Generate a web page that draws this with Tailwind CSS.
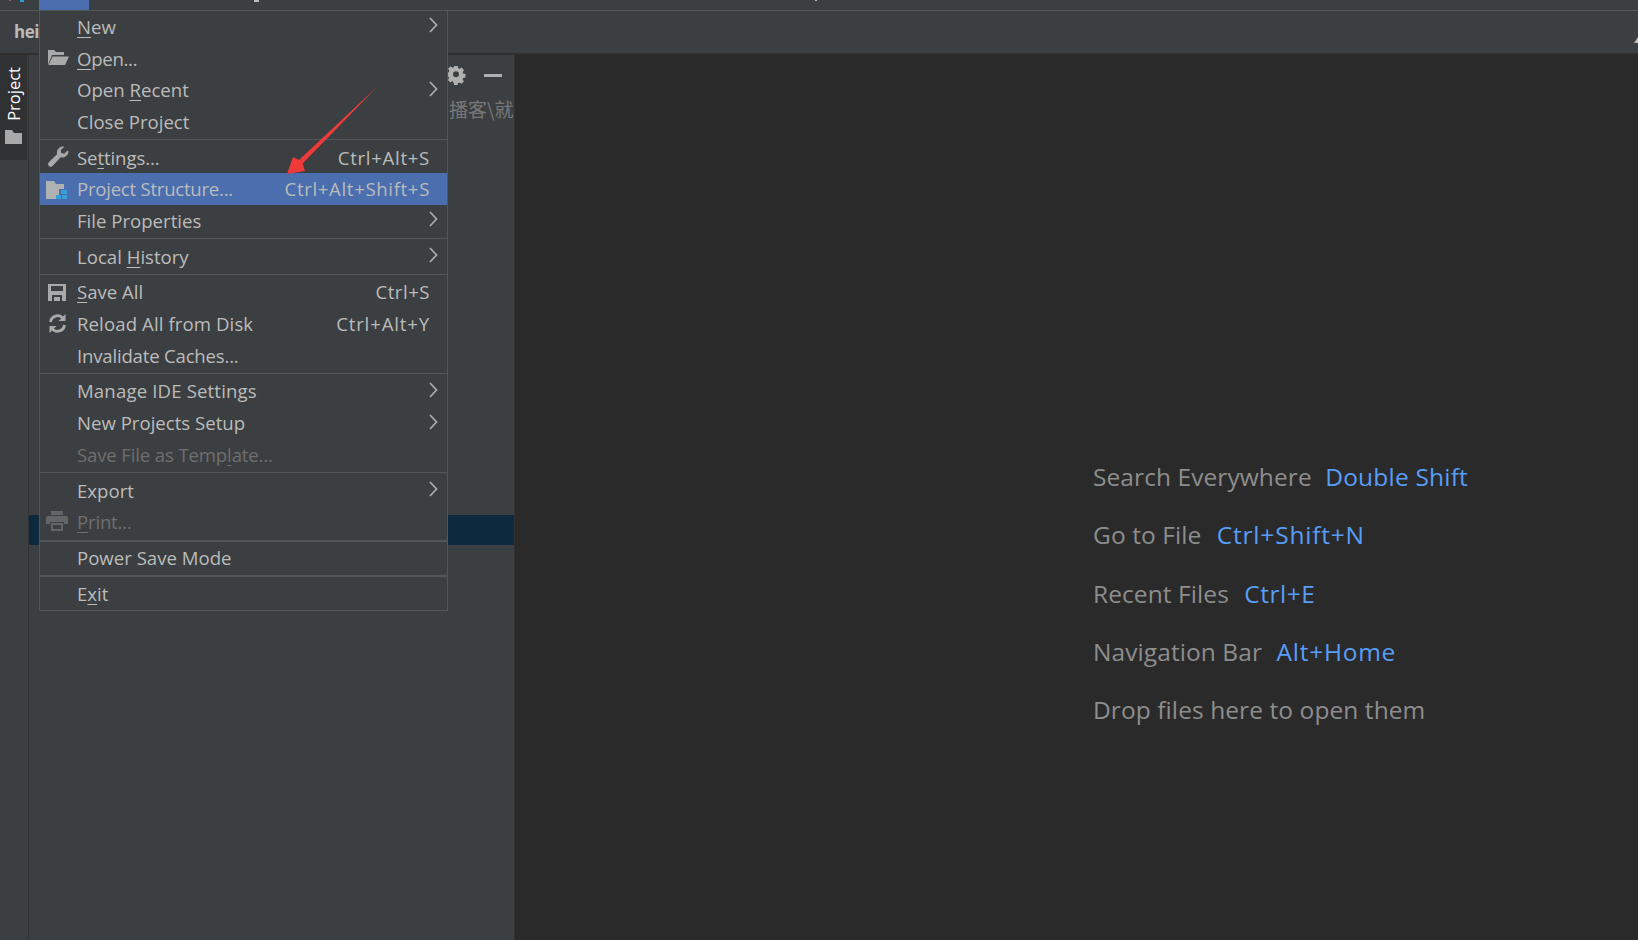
<!DOCTYPE html>
<html lang="en">
<head>
  <meta charset="UTF-8" />
  <title>Project Structure menu</title>
  <script src="https://cdn.jsdelivr.net/npm/@tailwindcss/browser@4"></script>
</head>
<body class="relative h-[940px] w-[1638px] overflow-hidden bg-[#2a2a2a] font-['Open_Sans','Noto_Sans',sans-serif] text-[#bbbbbb]">

  <!-- top menu bar, mostly cropped -->
  <div class="relative flex h-[11px] border-b border-[#515658] bg-[#3c3f41]">
    <div class="ml-[39px] h-[10px] w-[50px] bg-[#4b6eaf]"></div>
    <div class="absolute left-[9px] top-0 h-px w-[2px] bg-[#c75450]"></div>
    <div class="absolute left-[20px] top-0 h-[2px] w-[4px] bg-[#2f9bd8]"></div>
    <div class="absolute left-[254px] top-0 h-[2px] w-[5px] bg-[#bbbbbb]"></div>
    <div class="absolute left-[815px] top-0 h-px w-[2px] bg-[#bbbbbb]"></div>
  </div>

  <!-- navigation bar -->
  <div class="relative flex h-[44px] items-center border-b-2 border-[#2f2f2f] bg-[#3c3f41] pl-[14px] text-[17px] font-bold tracking-[-0.5px]">
    hei
    <div class="absolute right-0 top-[26px] h-0 w-0 border-b-[6px] border-l-[4px] border-b-[#bbbbbb] border-l-transparent"></div>
  </div>

  <div class="flex h-[885px]">
    <!-- tool window strip -->
    <div class="h-full w-[29px] border-r border-[#323232] bg-[#3c3f41]">
      <div class="flex h-[105px] w-[27px] flex-col items-center justify-start bg-[#2f3132] pt-[12px]">
        <span class="rotate-180 text-[16.500px] leading-[20px] text-white [writing-mode:vertical-rl]">Project</span>
        <svg class="mt-[9px]" width="17" height="14" viewBox="0 0 17 14"><path d="M0 0h7l2 3h8v11H0z" fill="#a9a9a9"/></svg>
      </div>
    </div>

    <!-- project panel -->
    <div class="relative h-full w-[486px] overflow-hidden border-r border-[#323232] bg-[#3c3f41]">
      <div class="absolute left-[418px] top-[10px] flex items-center gap-[17px]">
        <svg width="20" height="20" viewBox="0 0 20 20"><path fill="#b0b0b0" fill-rule="evenodd" d="M8 1h4l.5 2.600 1.500.7 2.300-1.400 2.600 2.800-1.500 2.200.6 1.600 2.500.5v4l-2.500.5-.6 1.500 1.400 2.200-2.800 2.700-2.200-1.500-1.500.6-.6 2.500H8l-.5-2.500L6 17.900l-2.200 1.500L1 16.700l1.400-2.200-.6-1.500L0 12.300V8.500l2-.5.6-1.600L1.200 4.300 4 1.500 6 3l1.500-.6zM10 7a3.300 3.300 0 100 6.600A3.300 3.300 0 0010 7z" transform="scale(.9)"/></svg>
        <div class="h-[3px] w-[18px] bg-[#b0b0b0]"></div>
      </div>
      <div class="absolute left-[401px] top-[42px] whitespace-nowrap font-['Noto_Sans_CJK_SC',sans-serif] text-[19px] leading-[24px] text-[#787878]">智播客\就业</div>
      <div class="absolute left-0 top-[460px] h-[30px] w-[485px] bg-[#0d293e]"></div>
    </div>

    <!-- empty editor hints -->
    <div class="flex flex-1 flex-col pl-[578px] pt-[393px] text-[24.500px] leading-[58.300px] tracking-[0.08px] text-[#8d8d8d]">
      <div>Search Everywhere <span class="ml-[7px] tracking-[0.2px] text-[#589df6]">Double Shift</span></div>
      <div>Go to File <span class="ml-[9px] tracking-[0.8px] text-[#589df6]">Ctrl+Shift+N</span></div>
      <div>Recent Files <span class="ml-[9px] tracking-[0.5px] text-[#589df6]">Ctrl+E</span></div>
      <div>Navigation Bar <span class="ml-[8px] tracking-[0.75px] text-[#589df6]">Alt+Home</span></div>
      <div>Drop files here to open them</div>
    </div>
  </div>

  <!-- file menu popup -->
  <div class="absolute left-[39px] top-[10px] w-[409px] border border-[#515658] bg-[#3c3f41] text-[18.600px]">
    <div class="flex h-[31.700px] items-center pl-[37px] pr-[9px]"><span class="flex-1"><u class="underline-offset-3">N</u>ew</span><svg class="mb-[3px]" width="10" height="16" viewBox="0 0 10 16"><path d="M2 1l6.500 7-6.500 7" fill="none" stroke="#a9a9a9" stroke-width="1.800"/></svg></div>
    <div class="relative flex h-[31.700px] items-center pl-[37px]">
      <svg class="absolute left-[7px] top-[6px]" width="22" height="17" viewBox="0 0 22 17"><path d="M1 16V1h6l2 2h8v3H5z" fill="#a9a9a9"/><path d="M5.500 7.500H22L18 16H1.500z" fill="#a9a9a9"/></svg>
      <span class="tracking-[-0.3px]"><u class="underline-offset-3">O</u>pen...</span>
    </div>
    <div class="flex h-[31.700px] items-center pl-[37px] pr-[9px]"><span class="flex-1">Open <u class="underline-offset-3">R</u>ecent</span><svg class="mb-[3px]" width="10" height="16" viewBox="0 0 10 16"><path d="M2 1l6.500 7-6.500 7" fill="none" stroke="#a9a9a9" stroke-width="1.800"/></svg></div>
    <div class="flex h-[31.700px] items-center pl-[37px]">Close Project</div>

    <div class="my-[1.500px] border-t border-[#515658]"></div>

    <div class="relative flex h-[31.700px] items-center pl-[37px] pr-[17px]">
      <svg class="absolute left-[7px] top-[4px]" width="22" height="22" viewBox="0 0 22 22"><path d="M21 5.500a5.500 5.500 0 01-7.400 5.200L5 20a2.300 2.300 0 01-3.200-3.200l8.800-8.700A5.500 5.500 0 0116.500 1l-3.300 3.300.7 3.200 3.300.7L20.500 5z" fill="#a9a9a9" stroke="#a9a9a9"/></svg>
      <span class="flex-1 tracking-[-0.1px]">Se<u class="underline-offset-3">t</u>tings...</span><span class="tracking-[0.7px]">Ctrl+Alt+S</span>
    </div>
    <div class="relative flex h-[31.700px] items-center bg-[#4b6eaf] pl-[37px] pr-[17px]">
      <svg class="absolute left-[6px] top-[8px]" width="22" height="18" viewBox="0 0 22 18"><path d="M0 0h8l2 3h8v5h-5v10H0z" fill="#afb1b3"/><path d="M15 9h6v4h-6zM10 14h5v4h-5zM16 14h5v4h-5z" fill="#389fd6"/></svg>
      <span class="flex-1 tracking-[-0.25px]">Project Structure...</span><span class="tracking-[0.65px]">Ctrl+Alt+Shift+S</span>
    </div>
    <div class="flex h-[31.700px] items-center pl-[37px] pr-[9px]"><span class="flex-1">File Properties</span><svg class="mb-[3px]" width="10" height="16" viewBox="0 0 10 16"><path d="M2 1l6.500 7-6.500 7" fill="none" stroke="#a9a9a9" stroke-width="1.800"/></svg></div>

    <div class="my-[1.500px] border-t border-[#515658]"></div>

    <div class="flex h-[31.700px] items-center pl-[37px] pr-[9px]"><span class="flex-1">Local <u class="underline-offset-3">H</u>istory</span><svg class="mb-[3px]" width="10" height="16" viewBox="0 0 10 16"><path d="M2 1l6.500 7-6.500 7" fill="none" stroke="#a9a9a9" stroke-width="1.800"/></svg></div>

    <div class="my-[1.500px] border-t border-[#515658]"></div>

    <div class="relative flex h-[31.700px] items-center pl-[37px] pr-[17px]">
      <svg class="absolute left-[8px] top-[7px]" width="18" height="17" viewBox="0 0 18 17"><path fill="#a9a9a9" fill-rule="evenodd" d="M0 0h18v17H0zM3 2v5h12V2zM4 11v6h10v-6z"/><path fill="#a9a9a9" d="M6 13h6v4H6z"/></svg>
      <span class="flex-1"><u class="underline-offset-3">S</u>ave All</span><span class="tracking-[0.5px]">Ctrl+S</span>
    </div>
    <div class="relative flex h-[31.700px] items-center pl-[37px] pr-[17px]">
      <svg class="absolute left-[8px] top-[6px]" width="19" height="19" viewBox="0 0 19 19"><path d="M2.500 8A7 7 0 0115 4.500M16.500 11A7 7 0 014 14.500" fill="none" stroke="#a9a9a9" stroke-width="2.800"/><path d="M17.500 0v7h-7zM1.500 19v-7h7z" fill="#a9a9a9"/></svg>
      <span class="flex-1 tracking-[0.1px]">Reload All from Disk</span><span class="tracking-[0.85px]">Ctrl+Alt+Y</span>
    </div>
    <div class="flex h-[31.700px] items-center pl-[37px] tracking-[-0.2px]">Invalidate Caches...</div>

    <div class="my-[1.500px] border-t border-[#515658]"></div>

    <div class="flex h-[31.700px] items-center pl-[37px] pr-[9px]"><span class="flex-1 tracking-[0.15px]">Manage IDE Settings</span><svg class="mb-[3px]" width="10" height="16" viewBox="0 0 10 16"><path d="M2 1l6.500 7-6.500 7" fill="none" stroke="#a9a9a9" stroke-width="1.800"/></svg></div>
    <div class="flex h-[31.700px] items-center pl-[37px] pr-[9px]"><span class="flex-1">New Projects Setup</span><svg class="mb-[3px]" width="10" height="16" viewBox="0 0 10 16"><path d="M2 1l6.500 7-6.500 7" fill="none" stroke="#a9a9a9" stroke-width="1.800"/></svg></div>
    <div class="flex h-[31.700px] items-center pl-[37px] text-[#6e6e6e]"><span class="tracking-[-0.15px]">Save File as Temp<u class="underline-offset-3">l</u>ate...</span></div>

    <div class="my-[1.500px] border-t border-[#515658]"></div>

    <div class="flex h-[31.700px] items-center pl-[37px] pr-[9px]"><span class="flex-1">Export</span><svg class="mb-[3px]" width="10" height="16" viewBox="0 0 10 16"><path d="M2 1l6.500 7-6.500 7" fill="none" stroke="#a9a9a9" stroke-width="1.800"/></svg></div>
    <div class="relative flex h-[31.700px] items-center pl-[37px] text-[#6e6e6e]">
      <svg class="absolute left-[6px] top-[5px]" width="22" height="20" viewBox="0 0 22 20"><path d="M5 0h12v4H5zM2 5h18a2 2 0 012 2v6h-4v-2H4v2H0V7a2 2 0 012-2zM5 12h12v8H5zM7 14v4h8v-4z" fill="#636669" fill-rule="evenodd"/></svg>
      <span class="tracking-[-0.2px]"><u class="underline-offset-3">P</u>rint...</span>
    </div>

    <div class="mb-[1px] mt-[1.500px] border-t-2 border-[#515658]"></div>

    <div class="flex h-[31.700px] items-center pl-[37px]">Power Save Mode</div>

    <div class="mb-[1px] mt-[1.300px] border-t-2 border-[#515658]"></div>

    <div class="flex h-[31.700px] items-center pl-[37px]"><span>E<u class="underline-offset-3">x</u>it</span></div>
  </div>

  <!-- red annotation arrow -->
  <svg class="absolute left-[280px] top-[80px]" width="110" height="100" viewBox="0 0 110 100"><path d="M98 6 L22.600 83.400 L25 91 L7 94 L13 77 L19 80 Z" fill="#f03a3a"/></svg>
</body>
</html>
